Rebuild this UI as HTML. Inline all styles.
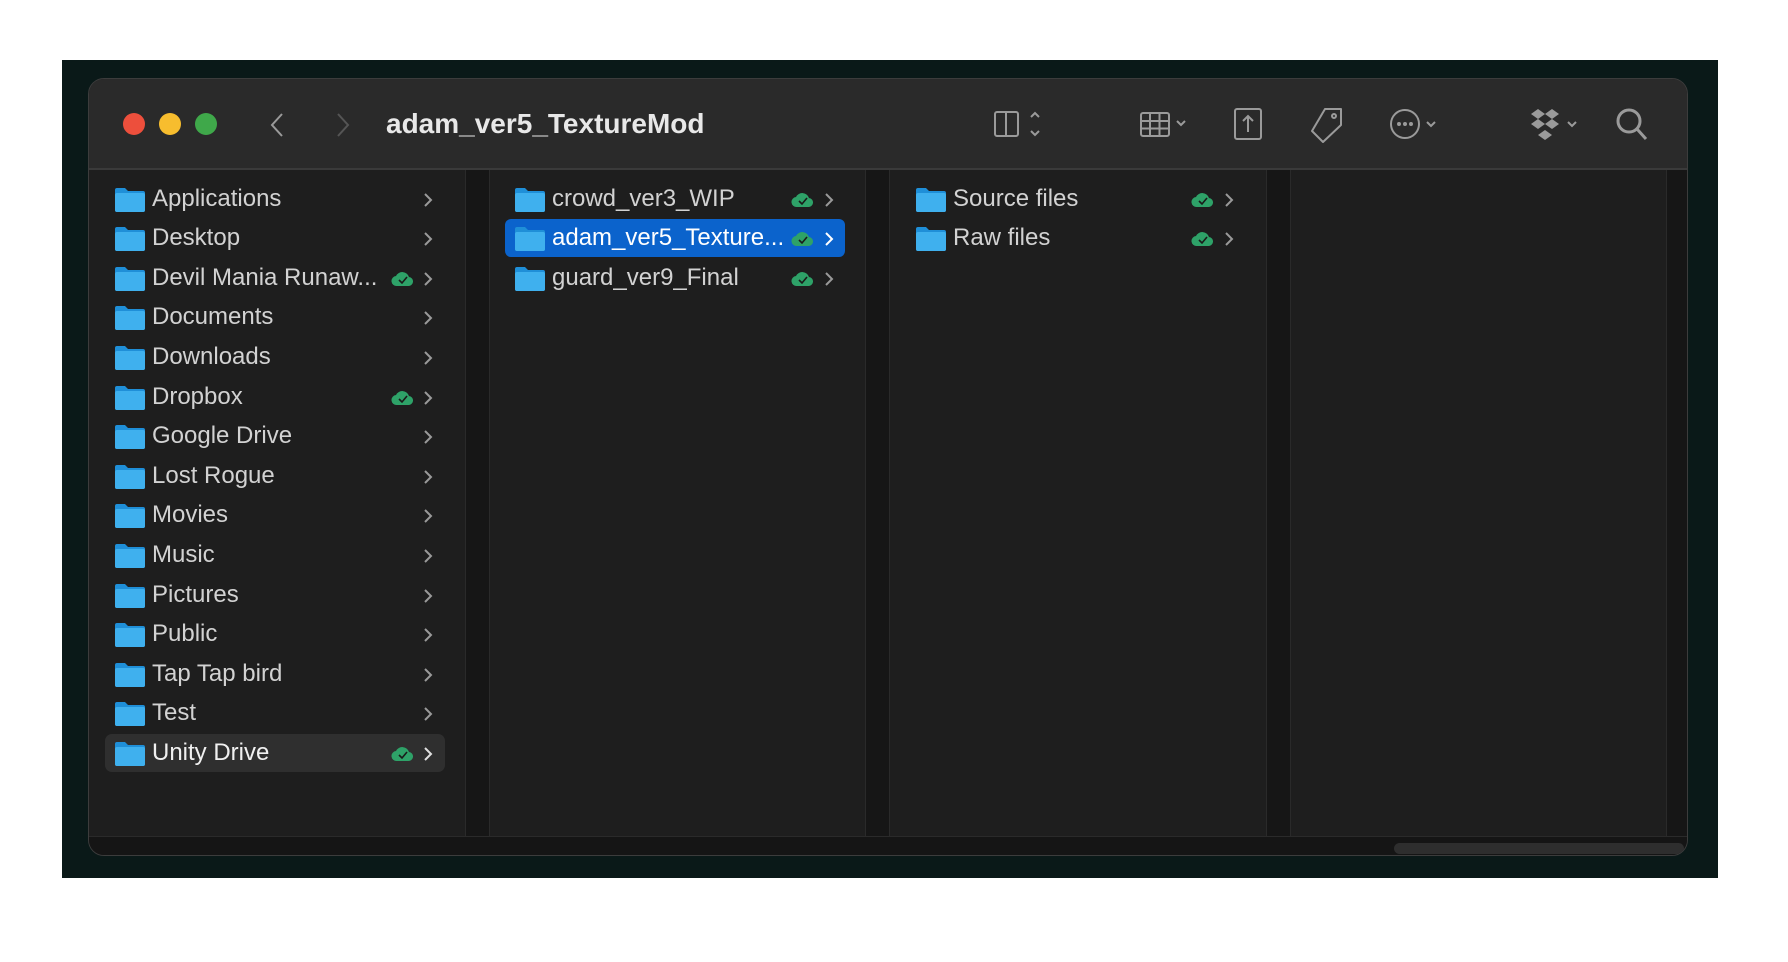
<!DOCTYPE html>
<html><head><meta charset="utf-8"><style>
*{margin:0;padding:0;box-sizing:border-box}
body{width:1788px;height:962px;background:#fff;position:relative;overflow:hidden;font-family:"Liberation Sans",sans-serif}
.bg{position:absolute;left:62px;top:60px;width:1656px;height:818px;background:#0a1918}
.win{position:absolute;left:88px;top:78px;width:1600px;height:778px;border:1.5px solid #3c3c3c;border-radius:16px;background:#1e1e1e;overflow:hidden}
.tb{position:absolute;left:0;top:0;width:100%;height:91px;background:#2a2a2a;border-bottom:2px solid #3a3a3a}
.dot{position:absolute;top:34px;width:22px;height:22px;border-radius:50%}
.title{position:absolute;left:297px;top:29px;font-size:28px;font-weight:bold;color:#e8e8e8;letter-spacing:0px}
.col{position:absolute;top:91px;height:666px;background:#1e1e1e}
.strip{position:absolute;top:91px;height:666px;background:#161616;border-left:1px solid #2a2a2a;border-right:1px solid #2a2a2a}
.sb{position:absolute;left:0;top:757px;width:100%;height:21px;background:#151515;border-top:1px solid #2a2a2a}
.thumb{position:absolute;left:1305px;top:6px;width:290px;height:11px;border-radius:6px;background:#2e2e2e}
.row{position:absolute;height:38px;font-size:24px;color:#d2d2d2;line-height:38px}
.row .f{position:absolute;top:7px}
.row .t{position:absolute;white-space:nowrap}
.row .c{position:absolute;top:10px}
.row .ch{position:absolute;top:12px}
svg{display:block}
</style></head><body>
<div class="bg"></div>
<div class="win">
 <div class="tb">
  <div class="dot" style="left:34px;background:#ed4f3c"></div>
  <div class="dot" style="left:70px;background:#f7bd2e"></div>
  <div class="dot" style="left:106px;background:#3fa84a"></div>
  <svg style="position:absolute;left:180px;top:33px" width="16" height="26"><path d="M13 2 L3 13 L13 24" fill="none" stroke="#9a9a9a" stroke-width="2"/></svg>
  <svg style="position:absolute;left:246px;top:33px" width="16" height="26"><path d="M3 2 L13 13 L3 24" fill="none" stroke="#555" stroke-width="2"/></svg>
  <div class="title">adam_ver5_TextureMod</div>
  <svg style="position:absolute;left:904px;top:29px" width="50" height="32" fill="none" stroke="#9a9a9a" stroke-width="2"><rect x="2" y="4" width="23" height="24" rx="2"/><path d="M13 4V28"/><path d="M38 9l4-4 4 4M38 23l4 4 4-4"/></svg>
  <svg style="position:absolute;left:1050px;top:29px" width="60" height="32" fill="none" stroke="#9a9a9a" stroke-width="2"><rect x="2" y="5" width="28" height="23" rx="2"/><path d="M2 13H30M2 20.5H30M11 5V28M20.5 5V28"/><path d="M38 13l4 4 4-4"/></svg>
  <svg style="position:absolute;left:1144px;top:26px" width="30" height="38" fill="none" stroke="#9a9a9a" stroke-width="2"><rect x="2" y="4" width="26" height="30" rx="2"/><path d="M15 27V11M10 16l5-5 5 5"/></svg>
  <svg style="position:absolute;left:1220px;top:26px" width="36" height="40" fill="none" stroke="#9a9a9a" stroke-width="2"><path d="M16 4H32V20L14 37 3 26Z" stroke-linejoin="round"/><circle cx="25" cy="11" r="2"/></svg>
  <svg style="position:absolute;left:1300px;top:28px" width="60" height="34" fill="none" stroke="#9a9a9a" stroke-width="2"><circle cx="16" cy="17" r="14"/><circle cx="10" cy="17" r="1" fill="#9a9a9a"/><circle cx="16" cy="17" r="1" fill="#9a9a9a"/><circle cx="22" cy="17" r="1" fill="#9a9a9a"/><path d="M38 15l4 4 4-4"/></svg>
  <svg style="position:absolute;left:1440px;top:27px" width="60" height="36"><g fill="#9a9a9a"><path d="M9 3l7 5-7 5-7-5z"/><path d="M23 3l7 5-7 5-7-5z"/><path d="M9 13l7 5-7 5-7-5z"/><path d="M23 13l7 5-7 5-7-5z"/><path d="M16 24l7 5-7 5-7-5z"/></g><path d="M39 16l4 4 4-4" fill="none" stroke="#9a9a9a" stroke-width="2"/></svg>
  <svg style="position:absolute;left:1525px;top:27px" width="36" height="36" fill="none" stroke="#9a9a9a" stroke-width="3"><circle cx="15" cy="15" r="11"/><path d="M23 23l9 10"/></svg>
 </div>
 <div class="col" style="left:0;width:376px"></div>
 <div class="strip" style="left:376px;width:25px"></div>
 <div class="col" style="left:401px;width:375px"></div>
 <div class="strip" style="left:776px;width:25px"></div>
 <div class="col" style="left:801px;width:376px"></div>
 <div class="strip" style="left:1177px;width:25px"></div>
 <div class="col" style="left:1202px;width:375px"></div>
 <div class="strip" style="left:1577px;width:23px"></div>
 <div class="sb"><div class="thumb"></div></div>
</div>
<div id="rows"></div>
<script>
var folder='<svg width="30" height="25"><path d="M0 3a2 2 0 0 1 2-2h8l3 3h15a2 2 0 0 1 2 2v17a2 2 0 0 1-2 2H2a2 2 0 0 1-2-2z" fill="#1f8fd8"/><rect x="0" y="6" width="30" height="19" rx="2" fill="#3fb0ee"/></svg>';
var check='<svg width="22" height="18"><path d="M6 17a5 5 0 0 1-1-10 7 7 0 0 1 13 1 4.5 4.5 0 0 1-1 9z" fill="#2ea268"/><path d="M8 11l3 3 5-6" fill="none" stroke="#1a1a1a" stroke-width="1.6"/></svg>';
function chev(c){return '<svg width="10" height="16"><path d="M2 2l6 6-6 6" fill="none" stroke="'+c+'" stroke-width="2"/></svg>';}
var h='';
var c1=["Applications","Desktop","Devil Mania Runaw...","Documents","Downloads","Dropbox","Google Drive","Lost Rogue","Movies","Music","Pictures","Public","Tap Tap bird","Test","Unity Drive"];
var chk1={2:1,5:1,14:1};
var S=39.6,Y0=179.5;
for(var i=0;i<c1.length;i++){
 var y=Y0+i*S;
 if(i==14) h+='<div style="position:absolute;left:105px;top:'+(y)+'px;width:340px;height:38px;border-radius:7px;background:#2f2f2f"></div>';
 h+='<div class="row" style="left:0;top:'+y+'px;width:500px'+(i==14?';color:#f0f0f0':'')+'"><div class="f" style="left:115px">'+folder+'</div><div class="t" style="left:152px">'+c1[i]+'</div>'+(chk1[i]?'<div class="c" style="left:391px">'+check+'</div>':'')+'<div class="ch" style="left:423px">'+chev(i==14?'#e0e0e0':'#9a9a9a')+'</div></div>';
}
var c2=["crowd_ver3_WIP","adam_ver5_Texture...","guard_ver9_Final"];
h+='<div style="position:absolute;left:505px;top:'+(Y0+S)+'px;width:340px;height:38px;border-radius:6px;background:#0b63cc"></div>';
for(var i=0;i<3;i++){var y=Y0+i*S;
 h+='<div class="row" style="left:0;top:'+y+'px;width:900px'+(i==1?';color:#fff':'')+'"><div class="f" style="left:515px">'+folder+'</div><div class="t" style="left:552px">'+c2[i]+'</div><div class="c" style="left:791px">'+check+'</div><div class="ch" style="left:824px">'+chev(i==1?'#fff':'#9a9a9a')+'</div></div>';}
var c3=["Source files","Raw files"];
for(var i=0;i<2;i++){var y=Y0+i*S;
 h+='<div class="row" style="left:0;top:'+y+'px;width:1300px"><div class="f" style="left:916px">'+folder+'</div><div class="t" style="left:953px">'+c3[i]+'</div><div class="c" style="left:1191px">'+check+'</div><div class="ch" style="left:1224px">'+chev('#9a9a9a')+'</div></div>';}
document.getElementById('rows').innerHTML=h;
</script>
</body></html>
